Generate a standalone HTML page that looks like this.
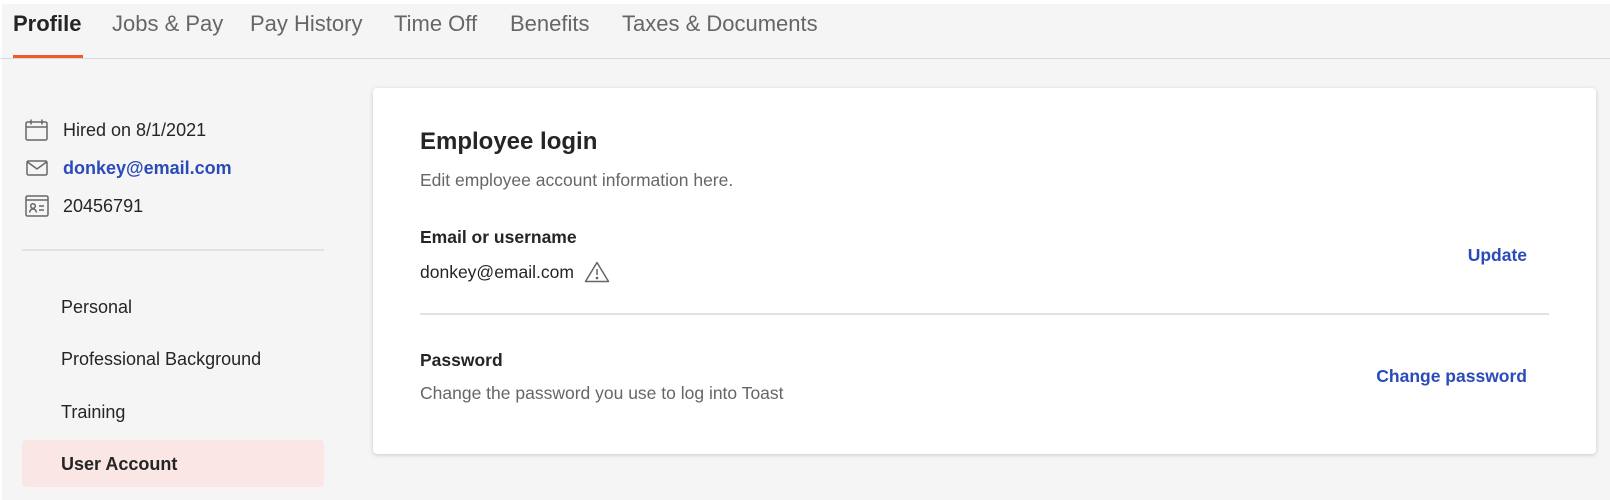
<!DOCTYPE html>
<html><head><meta charset="utf-8"><style>
*{margin:0;padding:0;box-sizing:border-box}
body{width:1610px;height:500px;background:#f5f5f5;font-family:"Liberation Sans",sans-serif;position:relative;overflow:hidden;color:#252525}
.a{position:absolute;white-space:nowrap;line-height:1}
.tab{font-size:22px;color:#666;top:13px}
.topw{position:absolute;left:0;top:0;width:1610px;height:4px;background:#fff}
.leftw{position:absolute;left:0;top:0;width:2px;height:500px;background:#fff}
.nav{font-size:18px;color:#252525;left:61px}
.card{position:absolute;left:373px;top:88px;width:1223px;height:366px;background:#fff;border-radius:4px;box-shadow:0 1px 4px rgba(0,0,0,.18)}
.blue{color:#2b4bb9;font-weight:bold}
</style></head><body>
<div class="topw"></div><div class="leftw"></div>
<span class="a tab" style="left:13px;color:#252525;font-weight:bold">Profile</span>
<span class="a tab" style="left:112px">Jobs &amp; Pay</span>
<span class="a tab" style="left:250px">Pay History</span>
<span class="a tab" style="left:394px">Time Off</span>
<span class="a tab" style="left:510px">Benefits</span>
<span class="a tab" style="left:622px">Taxes &amp; Documents</span>
<div style="position:absolute;left:0;top:58px;width:1610px;height:1px;background:#d8d8d8"></div>
<div style="position:absolute;left:13px;top:55px;width:70px;height:3px;background:#f2572a"></div>

<svg style="position:absolute;left:25px;top:119px" width="24" height="24" viewBox="0 0 24 24" fill="none" stroke="#666" stroke-width="1.5"><rect x="1" y="3" width="21" height="18" rx="1.5"/><path d="M1 8h21M6 0.5v5M17 0.5v5"/></svg>
<span class="a nav" style="left:63px;top:121px">Hired on 8/1/2021</span>
<svg style="position:absolute;left:26px;top:160px" width="22" height="16" viewBox="0 0 22 16" fill="none" stroke="#666" stroke-width="1.5"><rect x="1" y="1" width="20" height="14" rx="1.5"/><path d="M1.5 2l9.5 7 9.5-7"/></svg>
<span class="a nav blue" style="left:63px;top:159px">donkey@email.com</span>
<svg style="position:absolute;left:25px;top:195px" width="24" height="22" viewBox="0 0 24 22" fill="none" stroke="#666" stroke-width="1.5"><rect x="1" y="1" width="22" height="20" rx="1.5"/><path d="M1 5h22"/><circle cx="8" cy="11" r="2.3"/><path d="M4.5 17.5c.5-2.5 2-3.5 3.5-3.5s3 1 3.5 3.5M14 11h5M14 15h5"/></svg>
<span class="a nav" style="left:63px;top:197px">20456791</span>
<div style="position:absolute;left:22px;top:249px;width:302px;height:2px;background:#e2e2e2"></div>
<span class="a nav" style="top:298px">Personal</span>
<span class="a nav" style="top:350px">Professional Background</span>
<span class="a nav" style="top:403px">Training</span>
<div style="position:absolute;left:22px;top:440px;width:302px;height:47px;background:#fae6e4;border-radius:4px"></div>
<span class="a nav" style="top:455px;font-weight:bold">User Account</span>

<div class="card"></div>
<span class="a" style="left:420px;top:130px;font-size:24px;font-weight:bold">Employee login</span>
<span class="a" style="left:420px;top:172px;font-size:17.5px;color:#666">Edit employee account information here.</span>
<span class="a" style="left:420px;top:229px;font-size:17.5px;font-weight:bold">Email or username</span>
<span class="a" style="left:420px;top:264px;font-size:17.5px">donkey@email.com</span>
<svg style="position:absolute;left:584px;top:261px" width="26" height="22" viewBox="0 0 26 22" fill="none" stroke="#666" stroke-width="1.5"><path d="M13 1.5L1.5 20.5h23z" stroke-linejoin="round"/><path d="M13 8v6"/><circle cx="13" cy="17" r=".6" fill="#666"/></svg>
<span class="a blue" style="right:83px;top:247px;font-size:17.5px">Update</span>
<div style="position:absolute;left:420px;top:313px;width:1129px;height:2px;background:#e2e2e2"></div>
<span class="a" style="left:420px;top:352px;font-size:17.5px;font-weight:bold">Password</span>
<span class="a" style="left:420px;top:385px;font-size:17.5px;color:#666">Change the password you use to log into Toast</span>
<span class="a blue" style="right:83px;top:368px;font-size:17.5px">Change password</span>
</body></html>
